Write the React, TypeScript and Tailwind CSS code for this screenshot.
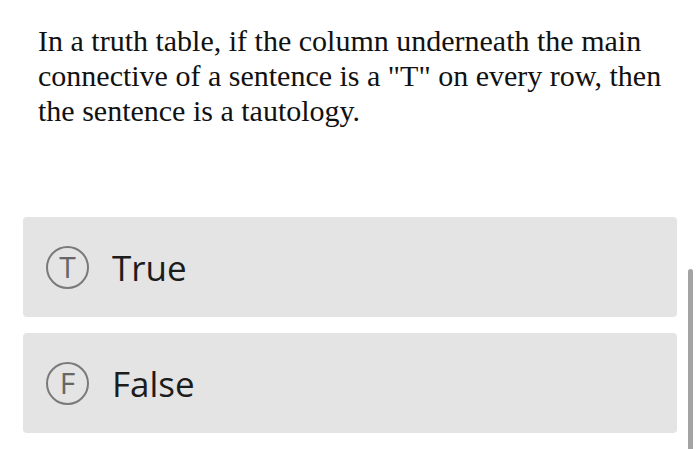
import React from 'react';

const options = [
  { letter: 'T', label: 'True' },
  { letter: 'F', label: 'False' },
];

export default function App() {
  return (
    <div className="relative h-[449px] w-[700px] overflow-hidden bg-white">
      <p
        className="pl-[38px] pr-[30px] pt-[23px] text-[30px] leading-[35px] text-[#111]"
        style={{ fontFamily: '"Liberation Serif", "Times New Roman", serif' }}
      >
        In a truth table, if the column underneath the main connective of a sentence is a "T" on every row, then the sentence is a tautology.
      </p>

      {/* answer choices */}
      <div className="mt-[89px] flex flex-col gap-4 px-[23px]">
        {options.map((o) => (
          <button
            key={o.letter}
            className="flex h-[100px] items-center gap-[23px] rounded-[4px] bg-[#e4e4e4] pl-[23px] text-left"
            style={{ fontFamily: '"Open Sans", "Noto Sans", sans-serif' }}
          >
            <span className="flex h-[43px] w-[43px] shrink-0 items-center justify-center rounded-full border-2 border-[#7a7a7a] text-[30px] font-medium leading-none text-[#666]">
              {o.letter}
            </span>
            <span className="text-[35px] leading-none text-[#1c1c1c]">{o.label}</span>
          </button>
        ))}
      </div>

      {/* overlay scrollbar */}
      <div className="absolute left-[688px] top-[269px] h-[190px] w-[5px] rounded-full bg-[#a3a3a3]" />
    </div>
  );
}
